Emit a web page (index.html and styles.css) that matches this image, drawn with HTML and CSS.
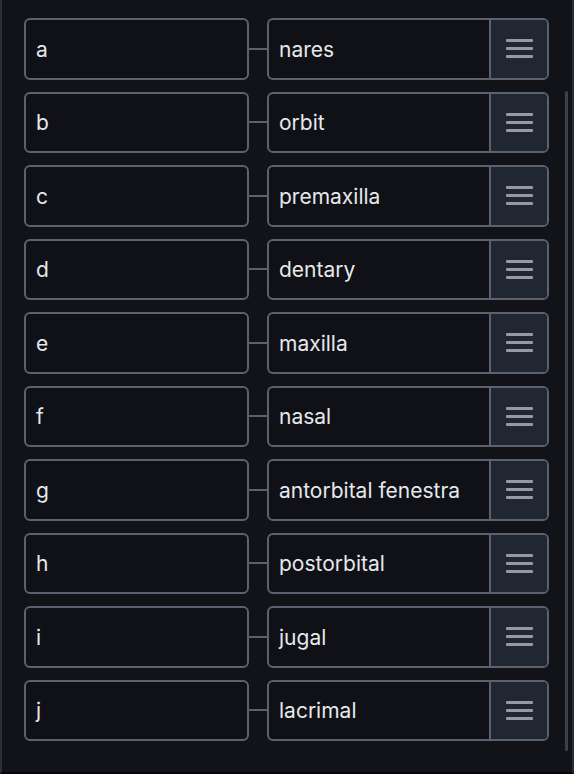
FILE: index.html
```html
<!DOCTYPE html>
<html>
<head>
<meta charset="utf-8">
<link rel="stylesheet" href="styles.css">
</head>
<body>
<div class="panel">
  <div class="list">
    <div class="row"><div class="term">a</div><div class="link"></div><div class="answer"><span class="label">nares</span><span class="handle"><i></i><i></i><i></i></span></div></div>
    <div class="row"><div class="term">b</div><div class="link"></div><div class="answer"><span class="label">orbit</span><span class="handle"><i></i><i></i><i></i></span></div></div>
    <div class="row"><div class="term">c</div><div class="link"></div><div class="answer"><span class="label">premaxilla</span><span class="handle"><i></i><i></i><i></i></span></div></div>
    <div class="row"><div class="term">d</div><div class="link"></div><div class="answer"><span class="label">dentary</span><span class="handle"><i></i><i></i><i></i></span></div></div>
    <div class="row"><div class="term">e</div><div class="link"></div><div class="answer"><span class="label">maxilla</span><span class="handle"><i></i><i></i><i></i></span></div></div>
    <div class="row"><div class="term">f</div><div class="link"></div><div class="answer"><span class="label">nasal</span><span class="handle"><i></i><i></i><i></i></span></div></div>
    <div class="row"><div class="term">g</div><div class="link"></div><div class="answer"><span class="label">antorbital fenestra</span><span class="handle"><i></i><i></i><i></i></span></div></div>
    <div class="row"><div class="term">h</div><div class="link"></div><div class="answer"><span class="label">postorbital</span><span class="handle"><i></i><i></i><i></i></span></div></div>
    <div class="row"><div class="term">i</div><div class="link"></div><div class="answer"><span class="label">jugal</span><span class="handle"><i></i><i></i><i></i></span></div></div>
    <div class="row"><div class="term">j</div><div class="link"></div><div class="answer"><span class="label">lacrimal</span><span class="handle"><i></i><i></i><i></i></span></div></div>
  </div>
  <div class="scrollbar"></div>
</div>
</body>
</html>
```
FILE: styles.css
```css
html, body {
  margin: 0;
  padding: 0;
  background: #111318;
}
body {
  font-family: Inter, "Liberation Sans", sans-serif;
  color: #e6e8eb;
}
.panel {
  position: relative;
  box-sizing: border-box;
  width: 574px;
  height: 774px;
  border-left: 2px solid #2a2e37;
  border-right: 2px solid #2a2e37;
  border-bottom: 2px solid #050608;
  padding: 18px 0 0 22px;
}
.list {
  display: flex;
  flex-direction: column;
  gap: 12px;
}
.row {
  display: flex;
  align-items: center;
  height: 61.5px;
}
.term {
  box-sizing: border-box;
  width: 225px;
  height: 100%;
  border: 2px solid #5b626d;
  border-radius: 6px;
  background: #0f1116;
  display: flex;
  align-items: center;
  padding: 1px 0 0 10px;
  font-size: 21px;
}
.link {
  width: 18px;
  height: 2px;
  background: #5b626d;
}
.answer {
  box-sizing: border-box;
  width: 282px;
  height: 100%;
  border: 2px solid #5b626d;
  border-radius: 6px;
  background: #0f1116;
  display: flex;
  overflow: hidden;
}
.label {
  flex: 1;
  display: flex;
  align-items: center;
  padding: 1px 0 0 10px;
  font-size: 21px;
}
.handle {
  width: 56px;
  background: #202632;
  border-left: 2px solid #5b626d;
  display: flex;
  flex-direction: column;
  align-items: center;
  justify-content: center;
  gap: 5px;
}
.handle i {
  display: block;
  width: 27px;
  height: 3px;
  background: #939aa4;
  border-radius: 1px;
}
.scrollbar {
  position: absolute;
  right: 4px;
  top: 91px;
  width: 3px;
  height: 660px;
  background: #3b4049;
  border-radius: 2px;
}
```
